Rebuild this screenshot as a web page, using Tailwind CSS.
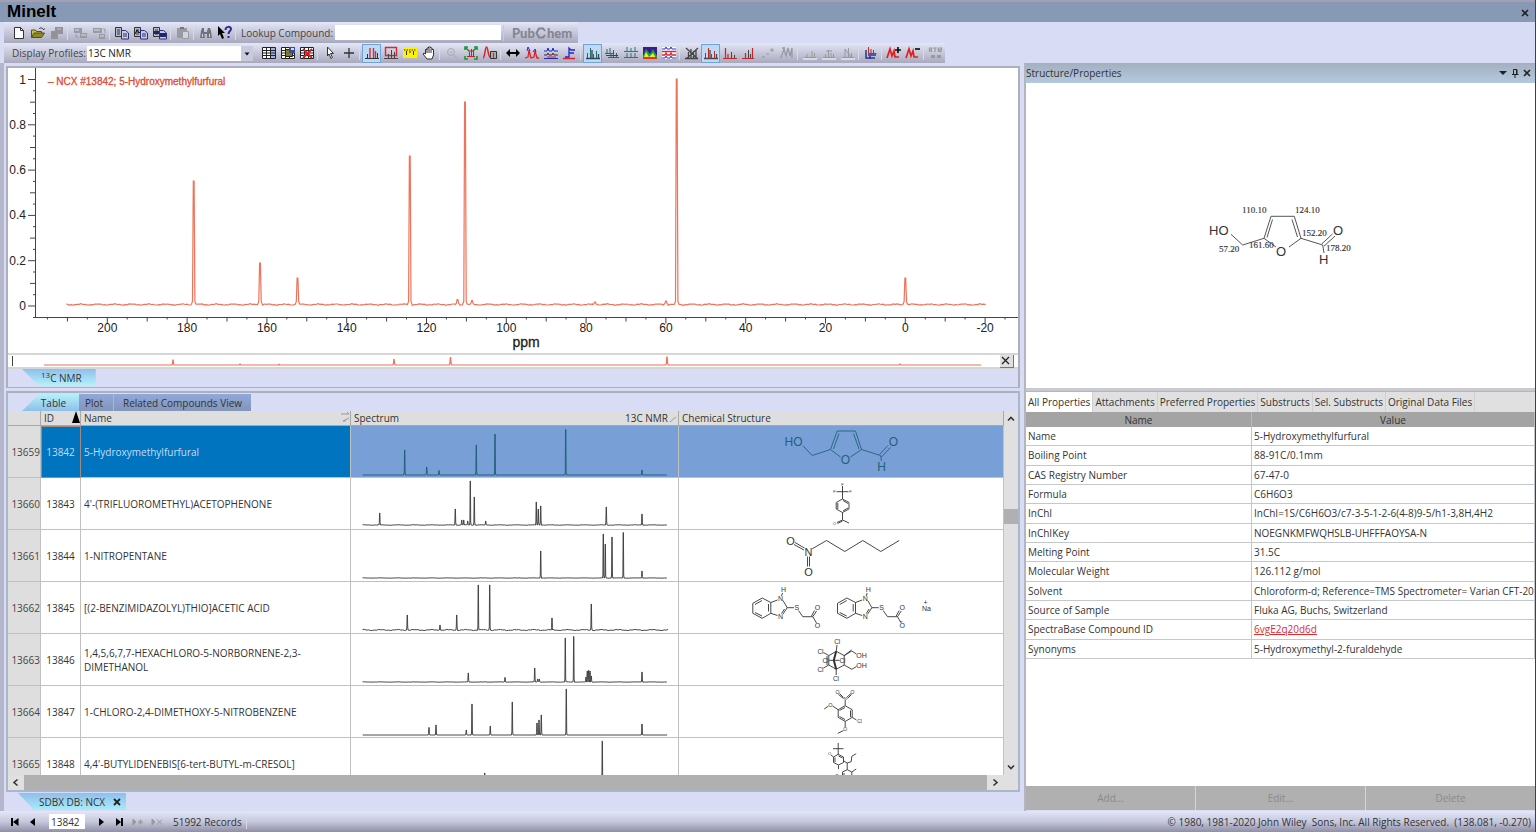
<!DOCTYPE html>
<html lang="en">
<head>
  <meta charset="UTF-8" />
  <meta name="viewport" content="width=device-width, initial-scale=1" />
  <title>MineIt</title>
  <script src="https://cdn.jsdelivr.net/npm/@tailwindcss/browser@4"></script>
</head>
<body class="h-screen overflow-hidden flex flex-col bg-[#d9dcf5] font-['Open_Sans','Noto_Sans',sans-serif] text-[10px] leading-[14px] text-[#333] border-r border-[#2f3f6e]">

  <!-- Title bar -->
  <header class="flex items-center justify-between h-[22px] shrink-0 border-t-2 border-[#a3a0b4] bg-[#8799b4] pl-[7px] pr-1">
    <h1 class="font-['Liberation_Sans',sans-serif] font-bold text-[17px] leading-5 text-black">MineIt</h1>
    <button aria-label="Close" class="w-3 h-3"><svg viewBox="0 0 12 12" class="w-3 h-3" stroke="#222" stroke-width="1.6"><path d="M3 4l6 6M9 4l-6 6" /></svg></button>
  </header>

  <!-- Main toolbar -->
  <div class="flex h-[21px] shrink-0 pl-1">
    <div class="flex items-center bg-linear-to-b from-[#e4e7f8] to-[#a9a9bd] pl-[5px]">
      <div id="mainTools" class="flex items-center"></div>
      <label for="lookup" class="pl-[3px] pr-0.5 text-[#444] whitespace-nowrap">Lookup Compound:</label>
      <input id="lookup" type="text" class="w-[166px] h-[15px] bg-white outline-none px-1" />
      <span class="w-px h-4 bg-[#c9cbdc] mx-0.5"></span>
      <button class="flex items-center w-[72px] h-full justify-center font-black font-['Lato',sans-serif] text-[13px] text-[#85858f]">Pub<svg viewBox="0 0 12 12" class="w-3 h-3" fill="none" stroke="#85858f" stroke-width="2"><path d="M10 4L8 1.5H4L1.5 6L4 10.5H8L10 8" /></svg>hem</button>
    </div>
  </div>

  <!-- Display toolbar -->
  <div class="flex h-5 shrink-0 pl-1">
    <div class="flex items-center bg-linear-to-b from-[#e4e7f8] to-[#a9a9bd] pl-2">
      <label for="profile" class="w-[75px] whitespace-nowrap text-[#444]">Display Profiles:</label>
      <div class="relative w-[166px]">
        <select id="profile" class="appearance-none w-full h-[15px] bg-white outline-none pl-px text-[#222]">
          <option>13C NMR</option>
          <option>1H NMR</option>
        </select>
        <svg viewBox="0 0 12 15" class="absolute right-0 top-0 w-3 h-[15px] pointer-events-none"><path fill="#c9cbdc" d="M0 0h12v15H0z" /><path fill="#111" d="M3.500 6.500h5L6 9.500z" /></svg>
      </div>
      <div id="displayTools" class="flex items-center pl-1.5"></div>
    </div>
  </div>

  <main class="flex-1 min-h-0 grid grid-cols-[minmax(0,1fr)_511px] gap-1 pl-1 border-l-4 border-[#b4b6cb]">

    <!-- Left column -->
    <div class="flex flex-col min-h-0 min-w-0 pt-[3px] -ml-0.5">

      <!-- Spectrum viewer -->
      <section class="h-[322px] shrink-0 border-2 border-b-[1px] border-[#adafba]">
        <svg id="chart" viewBox="8 68 1010 285" class="block w-full h-[285px] bg-white font-['Liberation_Sans',sans-serif]"></svg>
        <div class="relative border-y-2 border-[#d6d6d6] bg-white">
          <svg id="overview" viewBox="8 355 1010 12" class="block w-full h-3"></svg>
          <button aria-label="Close overview" class="absolute right-1 top-0 w-3.5 h-[13px] bg-[#e0e0e0] border-r border-b border-[#777]"><svg viewBox="0 0 12 12" class="block w-3 h-3" stroke="#222" stroke-width="1.3"><path d="M2 2l7 7M9 2l-7 7" /></svg></button>
        </div>
        <div class="pl-3.5">
          <button class="h-[17px] pl-[19px] pr-3.5 bg-linear-to-b from-[#8fbfec] to-[#b5f2f8] [clip-path:polygon(0_0,100%_0,100%_100%,17px_100%)]"><sup class="text-[8px]">13</sup>C NMR</button>
        </div>
      </section>

      <!-- Compound table -->
      <section class="mt-[3px] flex-1 min-h-0 flex flex-col border-2 border-[#a9b7c9] border-t-[#adafba]">
        <nav class="flex h-[18px] shrink-0 pl-3.5 pt-px">
          <button class="w-[57px] pl-1.5 bg-linear-to-b from-[#b5f2f8] to-[#8fbfec] [clip-path:polygon(17px_0,100%_0,100%_100%,0_100%)]">Table</button>
          <button class="w-[35px] pr-1 bg-linear-to-b from-[#8fa9dc] to-[#8395b8] border-r border-[#a9b7d5]">Plot</button>
          <button class="w-[137px] bg-linear-to-b from-[#8fa9dc] to-[#8395b8]">Related Compounds View</button>
        </nav>
        <div class="flex flex-1 min-h-0">
          <div class="flex-1 min-w-0 flex flex-col">
            <div class="flex-1 min-h-0 overflow-hidden bg-white">
              <table class="w-full table-fixed border-separate border-spacing-0 text-[#333]">
                <colgroup>
                  <col class="w-[33px]" /><col class="w-[40px]" /><col class="w-[270px]" /><col class="w-[328px]" /><col />
                </colgroup>
                <thead>
                  <tr class="bg-[#dedede] text-left leading-[14px] [&>th]:font-normal [&>th]:p-0 [&>th]:pl-[3px] [&>th]:border-r [&>th]:border-b [&>th]:border-[#a8a8a8]">
                    <th></th>
                    <th><div class="flex justify-between">ID<svg viewBox="0 0 8 12" class="w-2 h-3"><path d="M4 0L8 12H0z" /></svg></div></th>
                    <th><div class="flex justify-between">Name<svg viewBox="0 0 10 12" class="w-2.5 h-3" fill="none" stroke="#999"><path d="M1 3h8L7 1M9 7l-6 3h3" /></svg></div></th>
                    <th><div class="flex justify-between items-center"><span>Spectrum</span><span class="flex items-center">13C NMR<svg viewBox="0 0 10 12" class="w-2.5 h-3" fill="none" stroke="#999"><path d="M2 10l6-5" /></svg></span></div></th>
                    <th>Chemical Structure</th>
                  </tr>
                </thead>
                <tbody id="rows"></tbody>
              </table>
            </div>
            <!-- Horizontal scrollbar -->
            <div class="flex h-[15px] shrink-0 bg-[#e0e0e0]">
              <button aria-label="Scroll left" class="w-4"><svg viewBox="0 0 16 15" class="w-4 h-[15px]" fill="none" stroke="#333" stroke-width="1.6"><path d="M9.5 4.5L6 7.500L9.500 10.500" /></svg></button>
              <div class="flex-1 bg-[#b0b0b0]"></div>
              <button aria-label="Scroll right" class="w-[17px]"><svg viewBox="0 0 16 15" class="w-4 h-[15px]" fill="none" stroke="#333" stroke-width="1.6"><path d="M6.500 4.500L10 7.500L6.500 10.500" /></svg></button>
            </div>
          </div>
          <!-- Vertical scrollbar -->
          <div class="w-3.5 flex flex-col bg-[#e0e0e0] pb-[15px]">
            <button aria-label="Scroll up" class="h-4"><svg viewBox="0 0 14 16" class="w-3.5 h-4" fill="none" stroke="#333" stroke-width="1.6"><path d="M4 9.500L7 6.500L10 9.500" /></svg></button>
            <div class="grow-[26]"></div>
            <div class="h-[15px] bg-[#b0b0b0]"></div>
            <div class="grow-[74]"></div>
            <button aria-label="Scroll down" class="h-4"><svg viewBox="0 0 14 16" class="w-3.5 h-4" fill="none" stroke="#333" stroke-width="1.6"><path d="M4 6.500L7 9.500L10 6.500" /></svg></button>
          </div>
        </div>
      </section>

      <!-- Database tabs -->
      <div class="h-[19px] shrink-0 pl-3 pt-px">
        <div class="flex items-center justify-between w-[108px] h-[17px] pl-[21px] pr-[3px] bg-linear-to-b from-[#8fbfec] to-[#a9ebf6] [clip-path:polygon(0_0,100%_0,100%_100%,16px_100%)]">
          <span class="whitespace-nowrap">SDBX DB: NCX</span>
          <button aria-label="Close database" class="w-3 h-3"><svg viewBox="0 0 12 12" class="w-3 h-3" stroke="#222" stroke-width="1.8"><path d="M3 3l6 6M9 3l-6 6" /></svg></button>
        </div>
      </div>
    </div>

    <!-- Right column -->
    <aside class="flex flex-col min-h-0 pb-px border-l-2 border-[#b4b5c0]">
      <div class="flex items-center justify-between h-5 shrink-0 bg-linear-to-b from-[#a3b0c0] to-[#b4c9de] pr-0.5">
        <h2>Structure/Properties</h2>
        <div class="flex">
          <button aria-label="Menu" class="w-[13px]"><svg viewBox="0 0 13 12" class="w-[13px] h-3"><path fill="#222" d="M3 4h8L7 8z" /></svg></button>
          <button aria-label="Pin" class="w-3"><svg viewBox="0 0 12 12" class="w-3 h-3" fill="none" stroke="#222"><path d="M4.500 2.500h3.500v5h-3.500zM3 7.500h6.500M6 8v3M7.500 3v5" /></svg></button>
          <button aria-label="Close panel" class="w-3"><svg viewBox="0 0 12 12" class="w-3 h-3" stroke="#222" stroke-width="1.6"><path d="M3 3l6 6M9 3l-6 6" /></svg></button>
        </div>
      </div>

      <div class="flex items-center justify-center h-[305px] shrink-0 bg-white">
        <svg viewBox="1207 203 146 64" class="w-[146px] h-16 font-['Liberation_Sans',sans-serif] text-[13px]" fill="none" stroke="#555" stroke-width="1">
          <path d="M1230 233.300L1241.700 244L1263 237.300L1270 215.300H1293.300L1300 237.300L1288 246M1263 237.300L1275 246M1271.500 218.500L1266 236.500M1291 218.500L1296.500 236M1300 237.300L1321.700 244L1323 252M1320.700 243L1331.500 233M1323 245.200L1334 235" />
          <g fill="#333" stroke="none">
            <text x="1208" y="234">HO</text>
            <text x="1275" y="255">O</text>
            <text x="1332" y="234">O</text>
            <text x="1318" y="263">H</text>
            <g class="font-['Liberation_Serif',serif] text-[9px]" stroke="#333" stroke-width="0.15">
              <text x="1241" y="212">110.10</text>
              <text x="1294" y="212">124.10</text>
              <text x="1301" y="235">152.20</text>
              <text x="1218" y="251">57.20</text>
              <text x="1248" y="247">161.60</text>
              <text x="1325" y="250">178.20</text>
            </g>
          </g>
        </svg>
      </div>

      <div class="h-1 shrink-0 bg-[#c9c9cf] border-b border-[#b4b5c0]"></div>
      <nav class="flex h-5 shrink-0 items-stretch bg-[#e0e0e0] whitespace-nowrap [&>button]:px-0.5 [&>button]:border-r [&>button]:border-[#d0d0d0]">
        <button class="bg-white">All Properties</button>
        <button>Attachments</button>
        <button>Preferred Properties</button>
        <button>Substructs</button>
        <button>Sel. Substructs</button>
        <button>Original Data Files</button>
      </nav>
      <div class="flex-1 min-h-0 overflow-hidden bg-white">
        <table class="w-full h-[247px] table-fixed border-separate border-spacing-0">
          <colgroup><col class="w-[226px]" /><col /></colgroup>
          <thead>
            <tr class="h-[15px] bg-[#a4a4a4] [&>th]:font-normal [&>th]:p-0 [&>th]:border-r [&>th]:border-[#bbb]"><th>Name</th><th>Value</th></tr>
          </thead>
          <tbody id="props"></tbody>
        </table>
      </div>
      <div class="grid grid-cols-3 gap-px h-6 shrink-0 bg-[#d5d5d5] text-[#8a8a8a] [&>button]:bg-[#b0b0b0]">
        <button disabled>Add...</button>
        <button disabled>Edit...</button>
        <button disabled>Delete</button>
      </div>
    </aside>
  </main>

  <!-- Status bar -->
  <footer class="flex items-center h-[21px] shrink-0 bg-linear-to-b from-[#e4e7f8] via-[#c6c8dc] to-[#8f8fa6] pl-[7px] pr-1">
    <button aria-label="First record" class="w-4"><svg viewBox="0 0 16 16" class="w-4 h-4"><path d="M4 4h2v8H4zM11.500 4v8L6 8z" /></svg></button>
    <button aria-label="Previous record" class="w-5"><svg viewBox="0 0 16 16" class="w-4 h-4 ml-0.5"><path d="M10 4v8L5 8z" /></svg></button>
    <input aria-label="Record" value="13842" class="ml-1.5 w-9 h-[15px] bg-white outline-none pl-0.5" />
    <button aria-label="Next record" class="w-4 ml-2"><svg viewBox="0 0 16 16" class="w-4 h-4"><path d="M6 4v8l5-4z" /></svg></button>
    <button aria-label="Last record" class="w-4 ml-0.5"><svg viewBox="0 0 16 16" class="w-4 h-4"><path d="M5 4v8l5-4zM10 4h2v8h-2z" /></svg></button>
    <button aria-label="Add record" disabled class="w-4 ml-0.5"><svg viewBox="0 0 16 16" class="w-4 h-4" fill="#999" stroke="#999"><path d="M4 5v6l3-3z" /><path d="M9 8h5M11.500 5.500v5M10 6.500l3 3M13 6.500l-3 3" fill="none" /></svg></button>
    <button aria-label="Delete record" disabled class="w-4 ml-1"><svg viewBox="0 0 16 16" class="w-4 h-4" fill="#999" stroke="#999"><path d="M3 5v6l3-3z" /><path d="M8 5.500l5 5M13 5.500l-5 5" fill="none" /></svg></button>
    <span class="ml-2 border-r border-[#d5d6e4] pr-1">51992 Records</span>
    <span class="ml-auto whitespace-pre">© 1980, 1981-2020 John Wiley  Sons, Inc. All Rights Reserved.  (138.081, -0.270)</span>
  </footer>

<script>
  // ---------- toolbar icons, 16x16 ----------
  const GRID = '<path fill="#fff" stroke="#222" d="M1.500 2.500h13v11h-13z"/><path stroke="#222" fill="none" d="M1.500 5.500h13M1.500 8h13M1.500 10.500h13M5.500 2.500v11M9.500 2.500v11"/>';
  const PAGES = '<path fill="#b8bccb" stroke="#333" d="M1.500 2.500h6v9h-6z"/><path fill="#c5caf0" stroke="#2c2f86" d="M7.500 5.500h4l3 2.500v6h-7z"/><path stroke="#333" fill="none" d="M3 5h3M3 7h3M3 9h3M9 9h4M9 11h4"/>';
  const bars = (a, b) => `<path stroke="${a}" fill="none" d="M2.500 13V8M5.500 13V3M8.500 13V9M11.500 13V6"/><path stroke="${b}" fill="none" stroke-width="1.300" d="M1 13.500h14M7 13V5M13.500 13V9"/>`;

  const icons = {
    New: '<path fill="#fff" stroke="#333" d="M3.500 2.500h6l3 3v8h-9z"/><path fill="none" stroke="#333" d="M9.500 2.500v3h3"/>',
    Open: '<path fill="#c9c13c" stroke="#55501a" d="M1.500 12.500V5h4l1 1.500h5V8"/><path fill="#8c8a28" stroke="#55501a" d="M1.500 12.500L4 8h10.500l-3 4.500z"/><path fill="none" stroke="#333" d="M9 4c1.500-2 4-1 4.500 1l1-1.500"/>',
    Save: '<path fill="#929298" d="M6 2h8v7H6zM2 6h7v8H2z"/><path fill="#a9aab6" d="M8 3h4v2H8z"/>',
    Import: '<path fill="#999aa2" d="M2 3h8v5H2zM8 8h7v5H8z"/><path stroke="#dcdde8" d="M3 5h4M9 10h5"/><path stroke="#999aa2" fill="none" d="M4 9v3h3"/>',
    Export: '<path fill="#999aa2" d="M2 3h9v5H2zM8 9h6v5H8z"/><path stroke="#dcdde8" d="M3 5h6M9 11h4"/><path stroke="#999aa2" fill="none" d="M12 4h2v4"/>',
    Copy: PAGES,
    CopySpectrum: PAGES + '<path stroke="#111" fill="none" d="M2 9l2-4l2 3l2-2"/>',
    CopyTable: PAGES + '<path fill="#23265f" d="M8 8h6v4H8zM2 6h5v3H2z"/>',
    Paste: '<path fill="#9a9aa2" d="M2 3h10v10H2z"/><path fill="#d2d3de" stroke="#9a9aa2" d="M7.500 6.500h6v7h-6z"/><path fill="#777" d="M5 2h4v2H5z"/>',
    Find: '<path fill="#70737c" d="M4 3h2v3l1 7H2l1-7zM10 3h2l1 3l1 7H9V6zM6 7h4v2H6z"/><path fill="#d5d6e0" d="M4 9h1v3H4zM11 9h1v3h-1z"/>',
    Help: '<path d="M1 1l7 7H5l2 5l-2 1l-2-5l-2 2z"/><path fill="none" stroke="#2a2d8e" stroke-width="2" d="M8.500 5c0-4 5.500-4 5.500-1c0 2-2.500 2-2.500 5M11.500 11v2"/>',
    Grid: GRID + '<path fill="#9db2e6" d="M10 3h4v10h-4z"/><path stroke="#222" d="M10 5.500h4M10 8h4M10 10.500h4"/>',
    GridSave: GRID + '<path fill="#7d7a22" stroke="#222" d="M5.500 4.500h7v7h-7z"/><path fill="#3a48a0" d="M9 2h6v6H9z"/><path fill="#ddd" d="M11 3h3v2h-3z"/>',
    GridDelete: GRID + '<path stroke="#e01818" stroke-width="2" d="M4 4l9 9M13 4l-9 9"/>',
    Pointer: '<path fill="#fff" stroke="#333" d="M5.500 2l6 6.500H8.500l2 4l-1.500 1l-2-4.500L5.500 11z"/>',
    Crosshair: '<path stroke="#333" stroke-width="1.300" d="M8 3v10M3 8h10"/>',
    Peaks: '<path stroke="#333" fill="none" d="M1 13.500h14M3.500 13V9M13.500 13V8"/><path stroke="#d82a2a" fill="none" stroke-width="1.400" d="M6 13V3M9.500 13V3M11.500 13V6"/>',
    Region: '<path stroke="#d82a2a" fill="none" stroke-width="1.400" d="M2.500 2.500h11v8h-11z"/><path stroke="#444" d="M1 13.500h14M5.500 13V9M8.500 13V5M11.500 13V7"/>',
    Ruler: '<path fill="#fff200" d="M1 3h14v10H1z"/><path stroke="#333" stroke-dasharray="1.500 1" d="M2 5h12"/><path stroke="#333" d="M4.500 6v4M8 6v2M11.500 6v4"/>',
    Hand: '<path fill="#fff" stroke="#333" d="M4.500 9V4.500h1.500V3h1.500V2h2V3H11v1.500h1.500V10l-1.500 4H6L2 9l1-1z"/><path stroke="#333" d="M6 4v4M8 3v5M10 4v4"/>',
    ZoomOut: '<circle cx="7" cy="7" r="3.500" fill="none" stroke="#aaa"/><path stroke="#aaa" d="M10 10l3 3M5.500 7h3"/>',
    Fit: '<path fill="none" stroke="#159a2c" stroke-width="1.600" d="M2 5V2h3M11 2h3v3M14 11v3h-3M5 14H2v-3M3 3l3 3M13 3l-3 3"/><path stroke="#c42222" fill="none" d="M4 11.500h8M6.500 11V7M8.500 11V4M10.500 11V6M5 6h6"/>',
    ZoomPeak: '<path fill="none" stroke="#e02020" stroke-width="1.500" d="M1 13C3 13 3 2 4.500 2S6 11 8 12M9 13V8"/><path fill="#b9a6ab" stroke="#333" d="M8.500 6.500h6v7h-6z"/><path stroke="#c22" d="M11.500 13V8"/>',
    Flip: '<path d="M1 8l4-4v3h6V4l4 4l-4 4V9H5v3z"/>',
    Overlay: '<path fill="none" stroke="#e02020" stroke-width="1.300" d="M1 13l3-1l1-7l2 8l3-1l1-6l2 7h2"/><path fill="none" stroke="#2525d8" d="M3 6l1-4l2 4M9 7l2-3l1 3"/>',
    Stack: '<path fill="none" stroke="#2525c8" d="M1 6h3l1-3l1 3h3l1-3l1 3h4M1 13.500h14"/><path fill="none" stroke="#333" d="M1 10h3l1-2l1 2h3l1-2l1 2h4"/><path stroke="#d22" d="M4 12h9"/>',
    Baseline: '<path fill="none" stroke="#2525c8" stroke-width="1.300" d="M3 12h4V3l2 2h4M7 8h5"/><path stroke="#e02020" stroke-width="1.400" d="M1 13.500h12"/>',
    BarsA: bars('#2b6a6a', '#345'),
    BarsB: '<path stroke="#2b6a6a" d="M1 8.500h9M3 8V4M6 8V3M4 12.500h11M7 12V8M9.500 12V5M12.500 12V8"/><path stroke="#444" d="M2 10.500h12"/>',
    BarsC: '<path stroke="#2b7a72" d="M1 6.500h14M4 6V2M8 6V3M12 6V2M1 12.500h14M4 12V8M8 12V8M12 12V8"/>',
    HeatMap: '<path fill="#3b1a8e" d="M1 2h14v12H1z"/><path fill="#1ba04a" d="M1 11l3-7l4 5l3-5l4 7v3H1z"/><path fill="#f2ea22" d="M2 12l2-5l3 5l4-4l3 5H2z"/><path fill="#e63022" d="M1 12h14v2H1z"/>',
    Split: '<path fill="#fff" d="M1 2h14v12H1z"/><path fill="none" stroke="#2a36d8" d="M1 4h3l1-2l1 2h3l1-2l1 2h4M1 13h3l1-2l1 2h3l1-2l1 2h4"/><path fill="none" stroke="#e02828" stroke-width="1.300" d="M1 6.500h14M1 10h3l1-2l1 2h3l1-2l1 2h4"/>',
    Hide: '<path stroke="#444" stroke-width="1.300" fill="none" d="M4.500 13V7M7 13V4M9.500 13V6M12 13V5M2 3l12 11M14 3L2 14M1 13.500h13"/>',
    BarsD: bars('#c52626', '#544'),
    BarsE: '<path stroke="#c52626" fill="none" stroke-width="1.200" d="M1 13.500h14M3.500 13V3M6 13V9"/><path stroke="#444" d="M9.500 13V7M12.500 13v-3"/>',
    BarsF: '<path stroke="#c52626" fill="none" stroke-width="1.200" d="M1 13.500h12M4.500 13V8M11.500 13V3"/><path stroke="#444" d="M7.500 13V5M9.500 13V9"/>',
    Scatter: '<path stroke="#999" d="M2 12h3M6 9h3M10 5h4M12 3v4"/>',
    Waves: '<path stroke="#9a9aa2" stroke-width="1.300" fill="none" d="M2 13L5 4l2 7l2-8l2 8l2-8v10M3 3h3"/>',
    GreyA: '<path stroke="#fff" d="M1 14h14"/><path stroke="#999" d="M2 12.500h12M5 12V9M10 12V6M12.500 12V8"/>',
    GreyB: '<path stroke="#fff" d="M1 14h14"/><path stroke="#999" d="M2 12.500h12M4.500 12V9M7.500 12V5M10 12V8M5 6h6M12.500 12V9"/>',
    GreyC: '<path stroke="#fff" d="M1 14h14"/><path stroke="#999" fill="none" d="M2 12.500h12M5 12V4l6 8M8.500 12V3M11.500 12V8"/>',
    Axis: '<path stroke="#c22" fill="none" d="M5.500 2v6.500h8M8 8V4M10.500 8V5"/><path stroke="#2a3690" fill="none" stroke-width="1.500" d="M3 5v8h9M5 10h8M7 11v3"/>',
    AddPeak: '<path fill="none" stroke="#e02020" stroke-width="1.700" d="M1 13l3-9l2 7l2-5l1 6h4"/><path stroke="#111" stroke-width="1.700" d="M9 5h6M12 2v6"/>',
    RemovePeak: '<path fill="none" stroke="#e02020" stroke-width="1.700" d="M1 13l3-9l2 7l2-5l1 6h4"/><path stroke="#111" stroke-width="1.700" d="M10 4h5"/>',
    ATR: '<path fill="none" stroke="#999" stroke-width="1.200" d="M1.500 7V3h2v4M1.500 5h2M5 3h4M7 3v4M10.500 7V3h3v2h-3l3 2"/><path fill="#999" d="M3 10h4v3H3zM9 10h4v3H9z"/>'
  };

  function buildToolbar(id, names, active) {
    document.getElementById(id).innerHTML = names.map(n => n === '|'
      ? '<span class="w-px h-3.5 bg-[#d9dae8] ml-px mr-0.5"></span>'
      : `<button aria-label="${n}" class="${active.includes(n) ? 'w-[19px] h-[19px] flex items-center justify-center bg-[#bfd9f5] border border-[#6ea3d8]' : 'w-[19px] h-[19px] flex items-center justify-center'}"><svg viewBox="0 0 16 16" class="w-4 h-4 shrink-0">${icons[n]}</svg></button>`
    ).join('');
  }

  buildToolbar('mainTools', ['New', 'Open', 'Save', '|', 'Import', 'Export', '|', 'Copy', 'CopySpectrum', 'CopyTable', '|', 'Paste', '|', 'Find', 'Help', '|'], []);
  buildToolbar('displayTools', ['Grid', 'GridSave', 'GridDelete', '|', 'Pointer', 'Crosshair', '|', 'Peaks', 'Region', 'Ruler', 'Hand', '|',
    'ZoomOut', 'Fit', 'ZoomPeak', '|', 'Flip', 'Overlay', 'Stack', 'Baseline', '|', 'BarsA', 'BarsB', 'BarsC', 'HeatMap', 'Split', '|',
    'Hide', 'BarsD', 'BarsE', 'BarsF', 'Scatter', 'Waves', '|', 'GreyA', 'GreyB', 'GreyC', '|', 'Axis', '|', 'AddPeak', 'RemovePeak', '|', 'ATR'],
    ['Peaks', 'BarsA', 'BarsD']);

  // ---------- spectra ----------
  // peaks: [x, top y]; returns a path along the baseline from x0 to x1
  function trace(peaks, x0, x1, base, half, noise) {
    let d = `M${x0} ${base}`;
    let i = 0;
    const wiggle = x => noise * (Math.sin(x * 1.3) * 0.4 + Math.sin(x * 0.37) * 0.6);
    for (let x = x0; x < x1; x += 2) {
      while (i < peaks.length && peaks[i][0] - half * 2 < x) {
        const [px, top] = peaks[i++];
        const foot = base - Math.min(3, (base - top) * 0.2);
        d += `L${px - half * 2} ${base}L${px - half} ${foot}L${px - half / 3} ${top}H${px + half / 3}L${px + half} ${foot}L${px + half * 2} ${base}`;
        x = Math.max(x, px + half * 2);
      }
      d += `L${x.toFixed(1)} ${(base + wiggle(x)).toFixed(1)}`;
    }
    return d;
  }

  // main chart
  const ppmX = p => 905.3 - p * 3.99;
  const intY = v => 306 - v * 226.5;
  let axes = 'M35.500 68V317.500M33 317.500H1018';
  let labels = '';
  for (let i = 0; i <= 20; i++) {
    const y = intY(i / 20).toFixed(1);
    axes += `M${i % 4 === 0 ? 28 : i % 2 === 0 ? 30 : 33} ${y}H35`;
    if (i % 4 === 0) labels += `<text x="26" y="${+y + 4}" text-anchor="end">${i / 20}</text>`;
  }
  for (let p = 215; p >= -25; p -= 5) {
    const x = ppmX(p).toFixed(1);
    axes += `M${x} 317.500v${p % 20 === 0 ? 6 : p % 10 === 0 ? 4 : 2}`;
    if (p % 20 === 0) labels += `<text x="${x}" y="332" text-anchor="middle">${p}</text>`;
  }
  const nmr = [[193.7, 181], [260, 263], [297.5, 278], [409.8, 156], [465, 102], [676.7, 79], [905.3, 278]];
  const bumps = [[457.5, 299.5], [472, 300.5], [595, 302], [666, 301]];
  document.getElementById('chart').innerHTML =
    `<path d="${axes}" fill="none" stroke="#444" stroke-width="1"/>
     <g font-size="12" fill="#222">${labels}<text x="526" y="347" text-anchor="middle" font-size="14" stroke="#222" stroke-width="0.300">ppm</text></g>
     <path d="${trace(nmr.concat(bumps).sort((a, b) => a[0] - b[0]), 67, 986, 304.5, 1.2, 0.8)}" fill="none" stroke="#ee735a" stroke-width="1.200"/>
     <text x="48" y="85" font-size="10" fill="#e04a32" stroke="#e04a32" stroke-width="0.300">– NCX #13842; 5-Hydroxymethylfurfural</text>`;

  document.getElementById('overview').innerHTML =
    `<path d="M12.500 356v10" stroke="#444"/>
     <path d="${trace([[173, 360], [240, 364], [279, 364.3], [394, 359.5], [450.5, 357.5], [667, 357], [900, 364]], 44, 982, 365, 0.6, 0)}" fill="none" stroke="#ee735a" stroke-width="1.200"/>`;

  // ---------- structures, drawn in a 323x51 cell ----------
  const t = (x, y, s, size) => `<text x="${x}" y="${y}" text-anchor="middle" dominant-baseline="central" font-size="${size}" fill="currentColor" stroke="none">${s}</text>`;
  const benz = t(104, 7.7, 'H', 7) + t(101, 16.7, 'N', 7) + t(101, 34.3, 'N', 7) + t(117.3, 25.7, 'S', 7) + t(138, 25.7, 'O', 7) + t(138, 43.7, 'O', 7) +
    '<path d="M82.700 16L73.300 21.300V31.300L82.700 36.300L91.300 31.300V20.500ZM82.500 18.500L75.500 22.500M75.500 30.500L82.500 34M89 29.500V22M91.300 20.500L98 18M103.500 18.500L107.700 25.700L103.500 32M91.300 31.300L98 33.500M105 27L102 31.500M102 14l1-3M107.700 25.700H114.500M119 28.500L123.300 34.700H133.300L137 29M132 34L135 28.500M133.300 34.700L137 41"/>';

  const structures = [
    t(114, 16, 'HO', 12) + t(166, 34, 'O', 12) + t(214, 16, 'O', 12) + t(202, 40.5, 'H', 12) +
      '<path d="M123.700 20L132.700 29.500L151 23.500L157.700 5H176L182 23.500L171 31M151 23.500L161 31M159.500 7.500L154 23M174 7.500L179.500 23M182 23.500L201 29.500L202 35M200 28.500L208.500 19.500M202 31L211 21.500"/>',
    t(163, 6, 'F', 4) + t(155, 13.7, 'F', 4) + t(171, 13.7, 'F', 4) + t(155, 45.5, 'O', 4) +
      '<path d="M163 8V21L169.500 24.500V31L163 34.500L156.700 31V24.500L163 21M157 13.700H169M158.300 25V31M163.500 22.500L168.500 25.500M168.500 30L163.500 33M163 34.500V42L157.500 44.500M163 43L158 45.500M163 42L169.500 45"/>',
    t(111, 10.8, 'O', 11) + t(129, 21.500, 'N', 11) + t(129, 41.800, 'O', 11) +
      '<path d="M132.700 18.800L147 10.500L165.300 21.500L183.300 10.500L201.300 21.500L219.700 10.500M115.500 12.500L125 18M114.500 14.500L124.500 20M128 26.500V36.500M130 26.500V36.500"/>',
    `${benz}<g transform="translate(84.700 0)">${benz}</g>` + t(247, 26, 'Na', 7) + t(246, 20.500, '+', 7) + t(222, 39, '−', 6),
    t(157.700, 7.500, 'Cl', 6.500) + t(141, 17, 'Cl', 6.500) + t(146, 26.300, 'Cl', 6.500) + t(163, 26.300, 'Cl', 6.500) + t(141, 35.600, 'Cl', 6.500) + t(156.500, 44.500, 'Cl', 6.500) + t(182, 21.600, 'OH', 7) + t(182, 31, 'OH', 7) +
      '<path d="M157.500 11L156.700 17.300L149.300 21.600V31L156.700 35.300L164.700 31V21.600L156.700 17.300M156.700 35.300V41M147.500 22V31M149.300 21.600L144 18.500M149.300 31L144 34M149.500 26.300H160M164.700 21.600L172.300 17L177 20M164.700 31L172.300 35.300L177 32.500M164.700 21.600L172 16"/><path stroke-width="2" d="M156.700 17.300L154.300 26.300L156.700 35.300"/>',
    t(158, 5.800, 'O', 5) + t(173, 5.800, 'O', 5) + t(165.700, 12, 'N', 4) + t(151, 18.500, 'O', 5) + t(180, 35.300, 'Cl', 5) + t(165.700, 43, 'O', 5) +
      '<path d="M164 11.500L160 7.500M167 11.500L171.500 7.500M164 12.500L159 8.500M168 12.500L172 8.500M165.700 14V19.700L172.700 23.700V31.400L165.700 35.400L158.700 31.400V23.700L165.700 19.700M165.500 21.500L160 24.500M171 24.500V31M165.500 33.500L160 30.500M158.700 23.700L153 20M149 20L144.700 23M172.700 31.400L177 34M165.700 35.400V41M164 44.500L158.300 47.400"/>',
    t(150, 15.700, 'O', 4) +
      '<path d="M158.700 5V16.300L164 19V24.500L159 27L154 24.500V19L158.700 16.300M153.500 10.700H164M154 19L151.500 17M155.500 19.500V24M159 18L163 20M159 27V31M163.500 22.500L167.700 25L171.700 23.700L172.300 18.300L176.700 15.700M167.700 25V31.700L163 34V40L167.700 43L172.300 40V34L167.700 31.700M172.300 34L176.700 31M164.500 35V39M156 37h3"/>'
  ];

  // ---------- compound rows ----------
  const compounds = [
    { row: 13659, id: 13842, name: '5-Hydroxymethylfurfural', base: 49, noise: 0, peaks: [[53.7, 24], [75.7, 41], [88, 44.5], [125.3, 19], [144, 8], [214.7, 3.5], [291, 44]] },
    { row: 13660, id: 13843, name: "4'-(TRIFLUOROMETHYL)ACETOPHENONE", base: 47, noise: 0.3, peaks: [[28.7, 35], [104.3, 31], [110.7, 42], [112.7, 42], [116.7, 43], [119.3, 3], [123.3, 19], [134.7, 43], [185.3, 24], [187.3, 31], [189.7, 28], [255.3, 29], [291, 36]] },
    { row: 13661, id: 13844, name: '1-NITROPENTANE', base: 48, noise: 0.2, peaks: [[189.7, 21], [252.3, 4], [254.3, 14], [261, 7], [272.3, 2.5], [291, 41]] },
    { row: 13662, id: 13845, name: '[(2-BENZIMIDAZOLYL)THIO]ACETIC ACID', base: 48, noise: 0.7, peaks: [[56.3, 33], [89, 43], [105.7, 33], [127.3, 3], [138.7, 3], [201, 36], [240.3, 22]] },
    { row: 13663, id: 13846, name: '1,4,5,6,7,7-HEXACHLORO-5-NORBORNENE-2,3-<br>DIMETHANOL', base: 48, noise: 0.2, peaks: [[117.3, 39], [154, 43.5], [183.7, 34], [186.7, 45], [188.3, 45], [214.3, 4], [222.7, 2.5], [235, 43], [236.3, 37], [237.7, 36.5], [239, 37], [240.3, 42], [291, 38]] },
    { row: 13664, id: 13847, name: '1-CHLORO-2,4-DIMETHOXY-5-NITROBENZENE', base: 49, noise: 0, peaks: [[78, 41.5], [85, 39], [115.3, 44], [121, 18], [139.3, 40], [161.3, 16], [186, 37], [188, 34], [190.3, 29], [215.3, 3], [291, 38]] },
    { row: 13665, id: 13848, name: "4,4'-BUTYLIDENEBIS[6-tert-BUTYL-m-CRESOL]", base: 49, noise: 0, peaks: [[133.7, 35], [251.3, 3]] }
  ];

  document.getElementById('rows').innerHTML = compounds.map((c, i) => {
    const sel = i === 0;
    return `<tr class="${sel ? 'h-[52px] text-[#c5dcf5] [&>td]:p-0 [&>td]:border-r [&>td]:border-b [&>td]:border-[#c0c0c0]' : 'h-[52px] [&>td]:p-0 [&>td]:border-r [&>td]:border-b [&>td]:border-[#c0c0c0]'}">
      <td class="bg-[#dedede] text-right text-[#444]">${c.row}</td>
      <td class="${sel ? 'bg-[#0074bf] text-center outline outline-[#a08a80] -outline-offset-1' : 'text-center'}">${c.id}</td>
      <td class="${sel ? 'bg-[#0074bf]' : ''}"><div class="pl-[3px]">${c.name}</div></td>
      <td class="${sel ? 'bg-[#78a0d7] text-[#23607a]' : 'text-[#444]'}"><svg viewBox="0 0 327 51" class="block w-full h-[51px]"><path fill="none" stroke="currentColor" d="${trace(c.peaks, 11.7, 317.7, c.base, 0.4, c.noise)}"/></svg></td>
      <td class="${sel ? 'bg-[#78a0d7] text-[#23607a]' : 'text-[#333]'}"><svg viewBox="0 0 323 51" class="block w-full h-[51px] font-['Liberation_Sans',sans-serif]" fill="none" stroke="currentColor" stroke-width="0.900">${structures[i]}</svg></td>
    </tr>`;
  }).join('');

  // ---------- properties ----------
  const props = [
    ['Name', '5-Hydroxymethylfurfural'],
    ['Boiling Point', '88-91C/0.1mm'],
    ['CAS Registry Number', '67-47-0'],
    ['Formula', 'C6H6O3'],
    ['InChI', 'InChI=1S/C6H6O3/c7-3-5-1-2-6(4-8)9-5/h1-3,8H,4H2'],
    ['InChIKey', 'NOEGNKMFWQHSLB-UHFFFAOYSA-N'],
    ['Melting Point', '31.5C'],
    ['Molecular Weight', '126.112 g/mol'],
    ['Solvent', 'Chloroform-d; Reference=TMS Spectrometer= Varian CFT-20'],
    ['Source of Sample', 'Fluka AG, Buchs, Switzerland'],
    ['SpectraBase Compound ID', '<a href="#" class="text-[#e02b2b] underline">6vgE2q20d6d</a>'],
    ['Synonyms', '5-Hydroxymethyl-2-furaldehyde']
  ];
  document.getElementById('props').innerHTML = props.map(([k, v]) =>
    `<tr class="[&>td]:p-0 [&>td]:pl-0.5 [&>td]:border-r [&>td]:border-b [&>td]:border-[#c4c8cc] whitespace-nowrap"><td>${k}</td><td>${v}</td></tr>`
  ).join('');
</script>

</body>
</html>
